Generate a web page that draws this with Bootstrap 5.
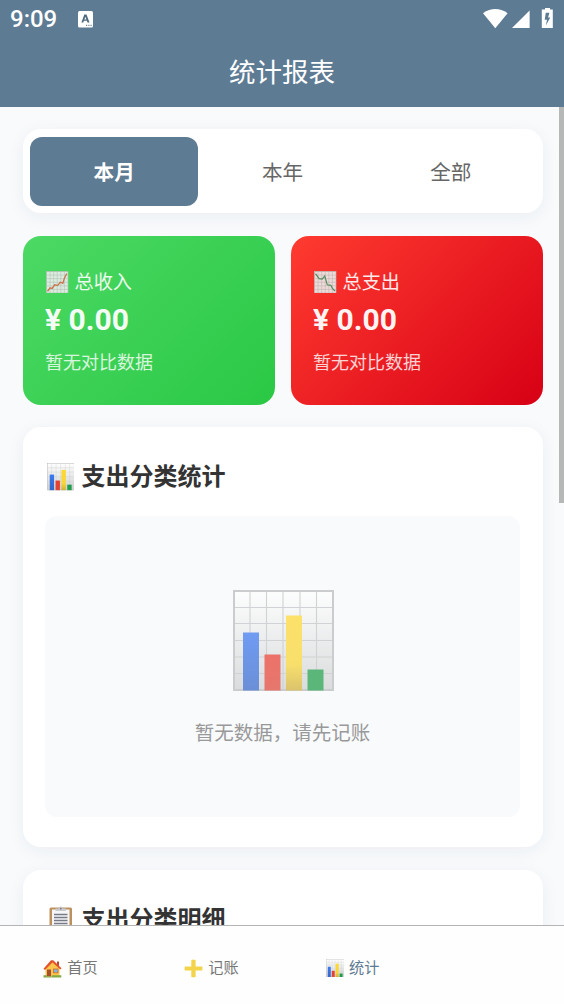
<!DOCTYPE html>
<html lang="zh-CN">
<head>
<meta charset="utf-8">
<meta name="viewport" content="width=device-width, initial-scale=1">
<title>统计报表</title>
<link href="https://cdn.jsdelivr.net/npm/bootstrap@5.3.0/dist/css/bootstrap.min.css" rel="stylesheet">
<style>
  :root { --slate: #5e7b94; --page: #f8fafc; }
  body { height: 1004px; overflow: hidden; background: var(--page); font-family: Roboto, "Noto Sans CJK SC", sans-serif; color: #333; }
  svg { display: block; flex: none; }
  .app-top { background: var(--slate); height: 107px; color: #fff; flex: none; }
  .status-row { height: 38px; padding: 0 10px; }
  .clock { font-size: 24px; line-height: 40px; font-weight: 500; }
  .alpha-icon { margin-left: 21px; }
  .screen-title { font-size: 26.5px; line-height: 70px; font-weight: 400; }
  .scroll-area { padding: 22px 21px 0 23px; min-height: 0; }
  .scroll-thumb { top: 0; right: 0; width: 5.5px; height: 396px; background: #b5b8b7; }
  .panel { background: #fff; border-radius: 18px; box-shadow: 0 4px 18px rgba(40,50,60,.06); flex: none; }
  .period { height: 84px; padding: 7.5px 8px 7.5px 7px; flex: none; }
  .period .nav-link { border-radius: 12px; color: #666; font-size: 20.6px; line-height: 72px; height: 69px; padding: 0; }
  .period .nav-link.active { background: var(--slate); color: #fff; font-weight: 700; }
  .stats { margin-top: 23px; gap: 16px; }
  .stat { height: 169px; border-radius: 18px; padding: 30px 22px 0; color: #fff; }
  .stat-in { background: linear-gradient(135deg, #4cd964, #2ac845); }
  .stat-out { background: linear-gradient(135deg, #ff3b30, #d70015); }
  .stat-label { font-size: 19.2px; height: 32px; line-height: 32px; gap: 6px; padding-left: 1px; opacity: .9; }
  .stat-label span { padding-top: 2px; }
  .stat-sum { font-size: 30px; line-height: 43px; font-weight: 700; opacity: .95; }
  .stat-note { font-size: 18px; line-height: 43px; opacity: .8; }
  .section-card { margin-top: 22px; padding: 22px 23px 0 22px; height: 420px; }
  .section-card + .section-card { margin-top: 23px; }
  .section-title { font-size: 24px; height: 54px; line-height: 54px; font-weight: 700; gap: 7.5px; padding-left: 1.5px; }
  .section-title span { padding-top: 1px; }
  .section-title svg { margin-top: 2px; }
  .empty-box { margin-top: 13px; height: 301px; border-radius: 12px; background: var(--page); }
  .empty-art { margin: 74px 0 0 2px; opacity: .72; }
  .empty-text { font-size: 19.5px; line-height: 30px; margin-top: 28px; color: #999; }
  .tab-bar { height: 79px; background: #fefefe; border-top: 1px solid #b4b4b4; flex: none; }
  .tab-cell { width: 141px; height: 84px; font-size: 15.2px; color: #777; gap: 5px; text-decoration: none; }
  .tab-cell span { padding-top: 1px; }
  .tab-cell.current { color: var(--slate); }
</style>
</head>
<body>
<svg width="0" height="0" class="position-absolute" aria-hidden="true">
  <defs>
    <linearGradient id="paper" x1="0" y1="0" x2="0" y2="1"><stop offset="0" stop-color="#fff"/><stop offset="1" stop-color="#cfd1d1"/></linearGradient>
    <linearGradient id="bBlue" x1="0" y1="0" x2="0" y2="1"><stop offset="0" stop-color="#3b78f0"/><stop offset="1" stop-color="#3567c9"/></linearGradient>
    <linearGradient id="bRed" x1="0" y1="0" x2="0" y2="1"><stop offset="0" stop-color="#e83f31"/><stop offset="1" stop-color="#e04538"/></linearGradient>
    <linearGradient id="bYel" x1="0" y1="0" x2="0" y2="1"><stop offset="0" stop-color="#fed933"/><stop offset=".65" stop-color="#f9d536"/><stop offset="1" stop-color="#cfae35"/></linearGradient>
    <symbol id="bars" viewBox="0 0 101 101">
      <rect x="1" y="1" width="99" height="99" fill="url(#paper)" stroke="#b9bbbb" stroke-width="2"/>
      <path d="M17 2V99M33.5 2V99M50 2V99M67 2V99M83.5 2V99M2 17.5H99M2 33.5H99M2 50.500H99M2 67H99M2 83.5H99" stroke="#c2c4c4" stroke-width="1.1"/>
      <rect x="10" y="42.500" width="16" height="58" fill="url(#bBlue)"/>
      <rect x="31.500" y="64.500" width="16" height="36" fill="url(#bRed)"/>
      <rect x="53" y="25.500" width="16" height="75" fill="url(#bYel)"/>
      <rect x="74.500" y="79.500" width="16" height="21" fill="#1f9d49"/>
    </symbol>
    <symbol id="grid" viewBox="0 0 22 22">
      <rect x=".4" y=".4" width="21.200" height="21.200" fill="#eceeed" stroke="#b9bfba" stroke-width=".8"/>
      <path d="M4 0V22M7.500 0V22M11 0V22M14.500 0V22M18 0V22M0 4H22M0 7.500H22M0 11H22M0 14.500H22M0 18H22" stroke="#bcc3bf" stroke-width=".6"/>
    </symbol>
  </defs>
</svg>
<div class="d-flex flex-column h-100">
  <header class="app-top">
    <div class="status-row d-flex align-items-center">
      <span class="clock">9:09</span>
      <svg class="alpha-icon" width="15" height="17" viewBox="0 0 15 17"><rect width="15" height="16.500" rx="1.500" fill="#fff"/><path fill="#4f6a80" fill-rule="evenodd" d="M6.300 3.500h2.200l3 8H9.500l-.6-1.700H5.900l-.6 1.700H3.400zM7.400 5.700 6.400 8.400h2z"/><path d="M8 14.300h1.200M10.300 14.300h1.200M12.500 14.300h1.200" stroke="#4f6a80"/></svg>
      <svg class="ms-auto" width="71" height="22" viewBox="0 0 71 22" fill="#fff">
        <path d="M0 5.200Q12.300-3.100 24.600 5.200L12.300 20.300z"/>
        <path d="M46.600 2.600V20H29z"/>
        <path fill-rule="evenodd" d="M62 0h5v1.500h2.800V20H58.800V1.500H62zM62.800 4.800 61.700 11.700h2.300l-1.200 5.800 4.500-7.900h-2.200l1.300-4.800z"/>
      </svg>
    </div>
    <h1 class="screen-title text-center m-0">统计报表</h1>
  </header>

  <main class="scroll-area d-flex flex-column flex-grow-1 overflow-hidden position-relative">
    <div class="scroll-thumb position-absolute"></div>
    <nav class="panel period nav nav-pills nav-fill flex-nowrap">
      <a class="nav-item nav-link active w-100" href="#">本月</a>
      <a class="nav-item nav-link w-100" href="#">本年</a>
      <a class="nav-item nav-link w-100" href="#">全部</a>
    </nav>

    <div class="stats d-flex flex-shrink-0">
      <section class="stat stat-in w-100">
        <div class="stat-label d-flex align-items-center">
          <svg width="22.500" height="22.500" viewBox="0 0 22 22"><use href="#grid"/><path d="M1.500 20 4 16.500l2 .5 2.500-3.500 3 .5 2.500-3 2.500 1L18 7l2.300-4.500" fill="none" stroke="#d9694b" stroke-width="1.300"/></svg>
          <span>总收入</span>
        </div>
        <div class="stat-sum">¥ 0.00</div>
        <div class="stat-note">暂无对比数据</div>
      </section>
      <section class="stat stat-out w-100">
        <div class="stat-label d-flex align-items-center">
          <svg width="22.500" height="22.500" viewBox="0 0 22 22"><use href="#grid"/><path d="M1.500 2.500 5 7.500l3 .5 2.500-3 2.500 8.500 3.500 .5 1.500 3 2.500 2.500" fill="none" stroke="#459868" stroke-width="1.200"/></svg>
          <span>总支出</span>
        </div>
        <div class="stat-sum">¥ 0.00</div>
        <div class="stat-note">暂无对比数据</div>
      </section>
    </div>

    <section class="panel section-card">
      <h2 class="section-title d-flex align-items-center m-0"><svg width="27.500" height="27.500"><use href="#bars"/></svg><span>支出分类统计</span></h2>
      <div class="empty-box d-flex flex-column align-items-center">
        <svg class="empty-art" width="101" height="101"><use href="#bars"/></svg>
        <div class="empty-text">暂无数据，请先记账</div>
      </div>
    </section>

    <section class="panel section-card">
      <h2 class="section-title d-flex align-items-center m-0">
        <svg width="27.500" height="28" viewBox="0 0 27.500 28"><rect x="2.500" y="1.500" width="22.500" height="26" rx="1.500" fill="#bd915e"/><rect x="5" y="3.500" width="17.500" height="22.500" fill="#f6f6f8"/><path d="M7 8.500H20.500M7 11.500H20.500M7 14.500H20.500M7 17.500H20.500M7 20.500H20.500" stroke="#777b86" stroke-width="1.300"/><path d="M8.500 5V2.500h3.300a2 2 0 0 1 4 0H19V5z" fill="#c9cbd0"/><circle cx="13.800" cy="2.600" r=".9" fill="#777"/></svg>
        <span>支出分类明细</span>
      </h2>
    </section>
  </main>

  <nav class="tab-bar d-flex">
    <a class="tab-cell d-flex align-items-center justify-content-center" href="#">
      <svg width="19" height="19" viewBox="0 0 19 19"><path d="M2.500 9 9.500 3l7 6v8.500h-14z" fill="#fbc64c"/><path d="M14 2.500h2V8l-2-2z" fill="#b5482b"/><path d="M.5 9.800 8 1.200h2.200l8.300 8-1.200 1.300-7.800-7-7.600 7.500z" fill="#e4512d"/><rect x="4" y="10.500" width="4" height="7" fill="#a5502f"/><rect x="10.500" y="10" width="4.500" height="3.800" fill="#7fb6d9" stroke="#d66a2c" stroke-width=".8"/><path d="M.5 16.300h3.300v1.200h5V16.300h9.500v2.200H.5z" fill="#82a944"/></svg>
      <span>首页</span>
    </a>
    <a class="tab-cell d-flex align-items-center justify-content-center" href="#">
      <svg width="19" height="19" viewBox="0 0 19 19"><path d="M8 .8h3q.6 0 .6 .6v6h6q.8 0 .8 .7v2.700q0 .7-.8 .7h-6v6q0 .7-.6 .7H8q-.7 0-.7-.7v-6h-6q-.7 0-.7-.7V8.100q0-.7 .7-.7h6v-6Q7.300 .8 8 .8z" fill="#f2d34a"/></svg>
      <span>记账</span>
    </a>
    <a class="tab-cell current d-flex align-items-center justify-content-center" href="#">
      <svg width="18.500" height="18.500"><use href="#bars"/></svg>
      <span>统计</span>
    </a>
  </nav>
</div>
<script src="https://cdn.jsdelivr.net/npm/bootstrap@5.3.0/dist/js/bootstrap.bundle.min.js"></script>
</body>
</html>
